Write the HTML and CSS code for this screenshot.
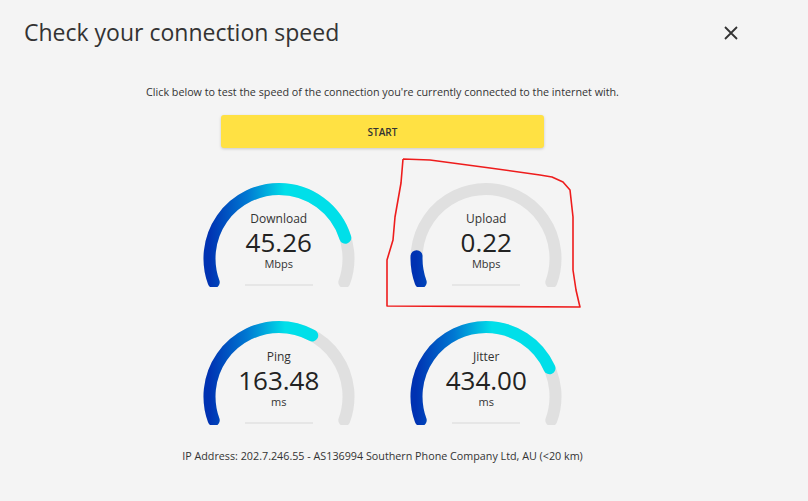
FILE: index.html
```html
<!DOCTYPE html>
<html lang="en">
<head>
    <meta charset="UTF-8">
    <meta name="viewport" content="width=device-width, initial-scale=1.0">
    <title>Check your connection speed</title>
    <link rel="stylesheet" href="styles.css">
</head>
<body>
    <svg class="defs" width="0" height="0" aria-hidden="true">
        <defs>
            <linearGradient id="meter" gradientUnits="userSpaceOnUse" x1="10" y1="0" x2="86" y2="0">
                <stop offset="0" stop-color="#0032b2"/>
                <stop offset="0.5" stop-color="#0078d2"/>
                <stop offset="1" stop-color="#00dfe9"/>
            </linearGradient>
        </defs>
    </svg>

    <header class="top">
        <h1 class="title">Check your connection speed</h1>
        <button class="close" aria-label="Close">
            <svg width="14" height="14" viewBox="0 0 14 14"><path d="M1 1 L13 13 M13 1 L1 13" stroke="#333" stroke-width="1.8" fill="none"/></svg>
        </button>
    </header>

    <main class="panel">
        <p class="intro">Click below to test the speed of the connection you're currently connected to the internet with.</p>
        <button class="start">START</button>

        <div class="gauges">
            <div class="gauge">
                <svg width="160" height="110" viewBox="0 0 160 110">
                    <path class="track" d="M14.69 105.27 A69.5 69.5 0 1 1 145.31 105.27" pathLength="100"/>
                    <path class="fill" d="M14.69 105.27 A69.5 69.5 0 1 1 145.31 105.27" pathLength="100" stroke-dasharray="83 200"/>
                </svg>
                <div class="reading">
                    <span class="label">Download</span>
                    <span class="value">45.26</span>
                    <span class="unit">Mbps</span>
                </div>
                <div class="base"></div>
            </div>
            <div class="gauge">
                <svg width="160" height="110" viewBox="0 0 160 110">
                    <path class="track" d="M14.69 105.27 A69.5 69.5 0 1 1 145.31 105.27" pathLength="100"/>
                    <path class="fill" d="M14.69 105.27 A69.5 69.5 0 1 1 145.31 105.27" pathLength="100" stroke-dasharray="10 200"/>
                </svg>
                <div class="reading">
                    <span class="label">Upload</span>
                    <span class="value">0.22</span>
                    <span class="unit">Mbps</span>
                </div>
                <div class="base"></div>
            </div>
            <div class="gauge">
                <svg width="160" height="110" viewBox="0 0 160 110">
                    <path class="track" d="M14.69 105.27 A69.5 69.5 0 1 1 145.31 105.27" pathLength="100"/>
                    <path class="fill" d="M14.69 105.27 A69.5 69.5 0 1 1 145.31 105.27" pathLength="100" stroke-dasharray="63 200"/>
                </svg>
                <div class="reading">
                    <span class="label">Ping</span>
                    <span class="value">163.48</span>
                    <span class="unit">ms</span>
                </div>
                <div class="base"></div>
            </div>
            <div class="gauge">
                <svg width="160" height="110" viewBox="0 0 160 110">
                    <path class="track" d="M14.69 105.27 A69.5 69.5 0 1 1 145.31 105.27" pathLength="100"/>
                    <path class="fill" d="M14.69 105.27 A69.5 69.5 0 1 1 145.31 105.27" pathLength="100" stroke-dasharray="80 200"/>
                </svg>
                <div class="reading">
                    <span class="label">Jitter</span>
                    <span class="value">434.00</span>
                    <span class="unit">ms</span>
                </div>
                <div class="base"></div>
            </div>
        </div>

        <p class="ip">IP Address: 202.7.246.55 - AS136994 Southern Phone Company Ltd, AU (&lt;20 km)</p>
    </main>

    <!-- hand-drawn highlight around the upload meter -->
    <svg class="scribble" width="808" height="501" viewBox="0 0 808 501">
        <polyline points="403,159 430,160 490,168 540,175 552,177 563,182 570,190 573,217 573,270 576,290 579,303 580,307 387,306 387,260 393,240 395,217 401,183 403,159"/>
    </svg>
</body>
</html>
```

FILE: styles.css
```css
body {
    margin: 0;
    width: 808px;
    height: 501px;
    overflow: hidden;
    position: relative;
    background-color: #f4f4f4;
    font-family: "Open Sans", sans-serif;
    color: #333;
}
.defs {
    position: absolute;
}
.top {
    display: flex;
    justify-content: space-between;
    align-items: center;
    padding: 14px 70px 0 24px;
    height: 36px;
}
.title {
    margin: 0;
    font-size: 23px;
    font-weight: 400;
    color: #333;
    line-height: 36px;
}
.close {
    background: none;
    border: none;
    padding: 0;
    width: 14px;
    height: 14px;
    cursor: pointer;
    display: flex;
    margin-top: 2px;
}
.panel {
    width: 765px;
    display: flex;
    flex-direction: column;
    align-items: center;
}
.intro {
    margin: 35px 0 0;
    font-size: 10.75px;
    line-height: 15px;
    color: #333;
}
.start {
    margin-top: 15px;
    width: 323px;
    height: 33px;
    border: none;
    border-radius: 3px;
    background-color: #ffe143;
    box-shadow: 0 1px 3px rgba(0, 0, 0, 0.18);
    font-family: "Open Sans", sans-serif;
    font-size: 10px;
    font-weight: 600;
    color: #333;
    cursor: pointer;
}
.gauges {
    margin-top: 29px;
    display: grid;
    grid-template-columns: 160px 160px;
    column-gap: 47.5px;
    row-gap: 28px;
}
.gauge {
    position: relative;
    width: 160px;
    height: 110px;
}
.gauge svg {
    display: block;
}
.track,
.fill {
    fill: none;
    stroke-width: 12;
    stroke-linecap: round;
}
.track {
    stroke: #e0e0e0;
}
.fill {
    stroke: url(#meter);
}
.reading {
    position: absolute;
    top: 34px;
    left: 0;
    right: 0;
    display: flex;
    flex-direction: column;
    align-items: center;
}
.label {
    font-size: 12px;
    line-height: 15px;
    color: #333;
}
.value {
    margin-top: 4px;
    font-size: 26px;
    font-weight: 500;
    line-height: 24px;
    color: #222;
}
.unit {
    margin-top: 3px;
    font-size: 11px;
    line-height: 14px;
    color: #333;
}
.base {
    position: absolute;
    left: 46px;
    width: 68px;
    top: 107px;
    height: 2px;
    background-color: #e6e6e6;
}
.ip {
    margin: 24px 0 0;
    font-size: 10.75px;
    line-height: 15px;
    color: #333;
}
.scribble {
    position: absolute;
    left: 0;
    top: 0;
    pointer-events: none;
}
.scribble polyline {
    fill: none;
    stroke: #ee1c1c;
    stroke-width: 1.6;
    stroke-linejoin: round;
}
```
